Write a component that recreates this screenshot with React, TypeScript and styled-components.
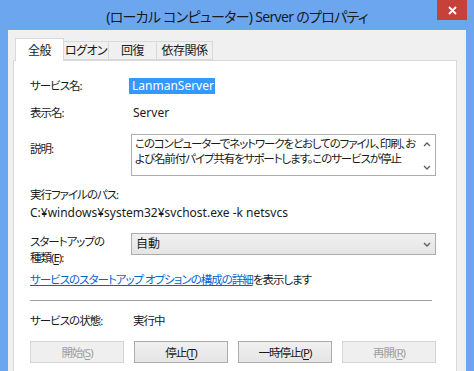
import React from 'react';
import styled, { createGlobalStyle, css } from 'styled-components';

const GlobalStyle = createGlobalStyle`
  html, body {
    margin: 0;
    padding: 0;
  }
  body {
    background: #6ca6ee;
    font-family: "Noto Sans", "Noto Sans CJK JP", sans-serif;
    font-feature-settings: "palt";
    color: #1a1a1a;
  }
`;

// Meiryo UI kana run narrower than Noto's, so Japanese text is condensed a little
const jp = css`
  font-size: 11.5px;
  letter-spacing: -1px;
`;

const Window = styled.div`
  width: 474px;
  height: 371px;
  overflow: hidden;
  background: #6ca6ee;
  display: flex;
  flex-direction: column;
`;

const TitleBar = styled.header`
  height: 30px;
  flex: none;
  display: grid;
  grid-template-columns: 1fr auto 1fr;
  align-items: start;
`;

const TitleText = styled.h1`
  grid-column: 2;
  margin: 0;
  padding-top: 8px;
  font-size: 14px;
  letter-spacing: -0.7px;
  line-height: 17px;
  font-weight: 400;
  color: #1a1a1a;
  white-space: nowrap;
`;

const CloseButton = styled.button`
  grid-column: 3;
  justify-self: end;
  margin-right: 7px;
  width: 30px;
  height: 20px;
  padding: 0;
  border: none;
  background: #c7413b;
  display: flex;
  align-items: center;
  justify-content: center;
`;

const Client = styled.div`
  flex: 1;
  margin: 0 8px;
  padding: 8px 9px 0 5px;
  background: #f0f0f0;
  display: flex;
  flex-direction: column;
`;

const TabRow = styled.div`
  height: 22px;
  display: flex;
  align-items: flex-end;
  padding-left: 3px;
`;

const Tab = styled.div<{ $active?: boolean; $w: number }>`
  box-sizing: border-box;
  width: ${p => p.$w}px;
  height: ${p => (p.$active ? 23 : 19)}px;
  margin-bottom: ${p => (p.$active ? -1 : 0)}px;
  position: relative;
  z-index: ${p => (p.$active ? 1 : 0)};
  background: ${p => (p.$active ? '#ffffff' : '#f0f0f0')};
  border: 1px solid #d9d9d9;
  border-bottom: ${p => (p.$active ? 'none' : '1px solid #d9d9d9')};
  margin-left: -1px;
  font-size: 12px;
  letter-spacing: -0.5px;
  line-height: 16px;
  padding: ${p => (p.$active ? '4px 0 0 0' : '1px 0 0 0')};
  text-align: center;
  white-space: nowrap;
`;

const Panel = styled.section`
  flex: 1;
  background: #ffffff;
  border: 1px solid #d9d9d9;
  border-bottom: none;
  padding: 0 20px 0 16px;
  display: flex;
  flex-direction: column;
  font-size: 12px;
  line-height: 16px;
`;

const Field = styled.div<{ $top: number }>`
  display: grid;
  grid-template-columns: 101px minmax(0, 1fr);
  margin-top: ${p => p.$top}px;
`;

const Label = styled.div<{ $pad?: number }>`
  ${jp};
  padding-top: ${p => p.$pad ?? 0}px;
  white-space: nowrap;
`;

const Value = styled.div<{ $jp?: boolean }>`
  ${p => p.$jp && jp};
  padding-left: 2px;
  white-space: nowrap;
`;

const Selected = styled.span`
  display: inline-block;
  background: #3399ff;
  color: #ffffff;
  margin-left: -4px;
  padding: 0 1px 0 3px;
`;

const TextBox = styled.div`
  box-sizing: border-box;
  height: 42px;
  border: 1px solid #abadb3;
  display: flex;
  background: #ffffff;
`;

const TextLines = styled.div`
  flex: 1;
  min-width: 0;
  overflow: hidden;
  padding: 1px 0 0 3px;
  font-size: 11.5px;
  letter-spacing: -1.1px;
  line-height: 15px;
`;

const TextLine = styled.div`
  white-space: nowrap;
`;

const ScrollBar = styled.div`
  width: 17px;
  flex: none;
  display: flex;
  flex-direction: column;
  justify-content: space-between;
  align-items: center;
  padding: 7px 0 5px;
`;

const Block = styled.div<{ $top: number; $jp?: boolean }>`
  ${p => p.$jp && jp};
  margin-top: ${p => p.$top}px;
  white-space: nowrap;
`;

const Select = styled.div`
  box-sizing: border-box;
  height: 22px;
  border: 1px solid #acacac;
  background: linear-gradient(#f0f0f0, #e5e5e5);
  display: flex;
  align-items: center;
  justify-content: space-between;
  padding: 0 4px;
  font-size: 12px;
`;

const Link = styled.a`
  color: #0066cc;
  text-decoration: underline;
`;

const Separator = styled.hr`
  margin: 12px 4px 0 0;
  border: none;
  border-top: 1px solid #a0a0a0;
  border-bottom: 1px solid #ffffff;
  height: 0;
`;

const ButtonRow = styled.div`
  margin-top: 12px;
  display: grid;
  grid-template-columns: repeat(4, 94px);
  justify-content: space-between;
`;

const Button = styled.button<{ $disabled?: boolean }>`
  box-sizing: border-box;
  height: 22px;
  padding: 0;
  font-family: inherit;
  font-feature-settings: "palt";
  ${jp};
  color: ${p => (p.$disabled ? '#a0a0a0' : '#1a1a1a')};
  border: 1px solid ${p => (p.$disabled ? '#d5d5d5' : '#acacac')};
  background: ${p => (p.$disabled ? '#efefef' : 'linear-gradient(#f0f0f0, #e5e5e5)')};
`;

const Key = styled.u`
  text-underline-offset: 2px;
`;

const Chevron = ({ up }: { up?: boolean }) => (
  <svg width="8" height="5" viewBox="0 0 8 5">
    <path
      d={up ? 'M1 4 L4 1 L7 4' : 'M1 1 L4 4 L7 1'}
      fill="none"
      stroke="#606060"
      strokeWidth="1.4"
    />
  </svg>
);

const tabs = [
  { label: '全般', w: 49, active: true },
  { label: 'ログオン', w: 46 },
  { label: '回復', w: 49 },
  { label: '依存関係', w: 57 },
];

const buttons = [
  { label: '開始', key: 'S', disabled: true },
  { label: '停止', key: 'T' },
  { label: '一時停止', key: 'P' },
  { label: '再開', key: 'R', disabled: true },
];

export default function App() {
  return (
    <Window>
      <GlobalStyle />
      <TitleBar>
        <TitleText>(ローカル コンピューター) Server のプロパティ</TitleText>
        <CloseButton aria-label="close">
          <svg width="9" height="9" viewBox="0 0 9 9">
            <path d="M1 1 L8 8 M8 1 L1 8" stroke="#fff" strokeWidth="1.8" />
          </svg>
        </CloseButton>
      </TitleBar>
      <Client>
        <TabRow>
          {tabs.map(t => (
            <Tab key={t.label} $active={t.active} $w={t.w}>
              {t.label}
            </Tab>
          ))}
        </TabRow>
        <Panel>
          <Field $top={17}>
            <Label>サービス名:</Label>
            <Value>
              <Selected>LanmanServer</Selected>
            </Value>
          </Field>
          <Field $top={11}>
            <Label>表示名:</Label>
            <Value>Server</Value>
          </Field>
          <Field $top={13}>
            <Label $pad={7}>説明:</Label>
            <TextBox>
              <TextLines>
                <TextLine>このコンピューターでネットワークをとおしてのファイル、印刷、お</TextLine>
                <TextLine>よび名前付パイプ共有をサポートします。このサービスが停止</TextLine>
              </TextLines>
              <ScrollBar>
                <Chevron up />
                <Chevron />
              </ScrollBar>
            </TextBox>
          </Field>
          <Block $top={11} $jp>実行ファイルのパス:</Block>
          <Block $top={2}>C:¥windows¥system32¥svchost.exe -k netsvcs</Block>
          <Field $top={12}>
            <Label $pad={1}>
              スタートアップの
              <br />
              種類(<Key>E</Key>):
            </Label>
            <Select>
              <span>自動</span>
              <Chevron />
            </Select>
          </Field>
          <Block $top={6} $jp>
            <Link>サービスのスタートアップ オプションの構成の詳細</Link>を表示します
          </Block>
          <Separator />
          <Field $top={11}>
            <Label>サービスの状態:</Label>
            <Value $jp>実行中</Value>
          </Field>
          <ButtonRow>
            {buttons.map(b => (
              <Button key={b.label} $disabled={b.disabled}>
                {b.label}(<Key>{b.key}</Key>)
              </Button>
            ))}
          </ButtonRow>
        </Panel>
      </Client>
    </Window>
  );
}
